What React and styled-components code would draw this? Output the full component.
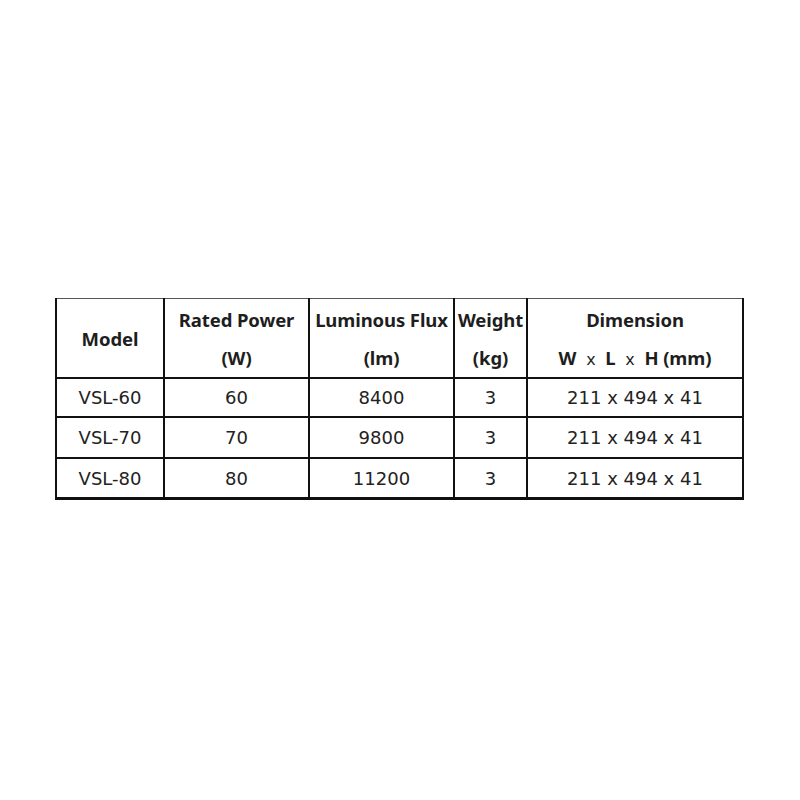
import React from 'react';
import styled, { createGlobalStyle } from 'styled-components';

const GlobalStyle = createGlobalStyle`
  html, body {
    margin: 0;
    padding: 0;
    background: #FFF;
  }
`;

const Page = styled.div`
  width: 800px;
  height: 800px;
  display: flex;
  align-items: flex-start;
  justify-content: flex-start;
  padding: 298px 0 0 55px;
  box-sizing: border-box;
`;

const Table = styled.table`
  border-collapse: collapse;
  table-layout: fixed;
  width: 689px;
  color: #1E1E1E;
  border-top: 1.5px solid #555;
  border-left: 2px solid #111;
  border-right: 2px solid #111;
  border-bottom: 3px solid #111;
`;

const HeadCell = styled.th`
  font-family: "Noto Sans", "Open Sans", sans-serif;
  font-weight: 700;
  font-size: 18.5px;
  letter-spacing: -0.1px;
  padding: 0;
  height: 78px;
  border: 2px solid #111;
  border-top: none;
  text-align: center;
  vertical-align: middle;
  white-space: nowrap;
`;

const HeadLine = styled.div`
  height: 38px;
  line-height: 38px;
  margin-top: ${p => (p.second ? '0' : '2px')};
`;

const Times = styled.span`
  font-weight: 400;
  font-size: 17px;
  margin: 0 10px;
`;

const Cell = styled.td`
  font-family: "DejaVu Sans", "Liberation Sans", sans-serif;
  font-size: 18px;
  color: #222;
  padding: 0;
  height: ${p => p.h}px;
  border: 2px solid #111;
  text-align: center;
  vertical-align: middle;
  white-space: nowrap;
`;

const rows = [
  { model: 'VSL-60', power: 60, flux: 8400, weight: 3, dim: '211 x 494 x 41', h: 37 },
  { model: 'VSL-70', power: 70, flux: 9800, weight: 3, dim: '211 x 494 x 41', h: 39 },
  { model: 'VSL-80', power: 80, flux: 11200, weight: 3, dim: '211 x 494 x 41', h: 38 },
];

const widths = [108, 145, 145, 73, 216];

export default function App() {
  return (
    <>
      <GlobalStyle />
      <Page>
        <Table>
          <colgroup>
            {widths.map((w, i) => (
              <col key={i} style={{ width: w }} />
            ))}
          </colgroup>
          <thead>
            <tr>
              <HeadCell>Model</HeadCell>
              <HeadCell>
                <HeadLine>Rated Power</HeadLine>
                <HeadLine second>(W)</HeadLine>
              </HeadCell>
              <HeadCell>
                <HeadLine>Luminous Flux</HeadLine>
                <HeadLine second>(lm)</HeadLine>
              </HeadCell>
              <HeadCell>
                <HeadLine>Weight</HeadLine>
                <HeadLine second>(kg)</HeadLine>
              </HeadCell>
              <HeadCell>
                <HeadLine>Dimension</HeadLine>
                <HeadLine second>
                  W<Times>x</Times>L<Times>x</Times>H (mm)
                </HeadLine>
              </HeadCell>
            </tr>
          </thead>
          <tbody>
            {rows.map(row => (
              <tr key={row.model}>
                <Cell h={row.h}>{row.model}</Cell>
                <Cell h={row.h}>{row.power}</Cell>
                <Cell h={row.h}>{row.flux}</Cell>
                <Cell h={row.h}>{row.weight}</Cell>
                <Cell h={row.h}>{row.dim}</Cell>
              </tr>
            ))}
          </tbody>
        </Table>
      </Page>
    </>
  );
}
